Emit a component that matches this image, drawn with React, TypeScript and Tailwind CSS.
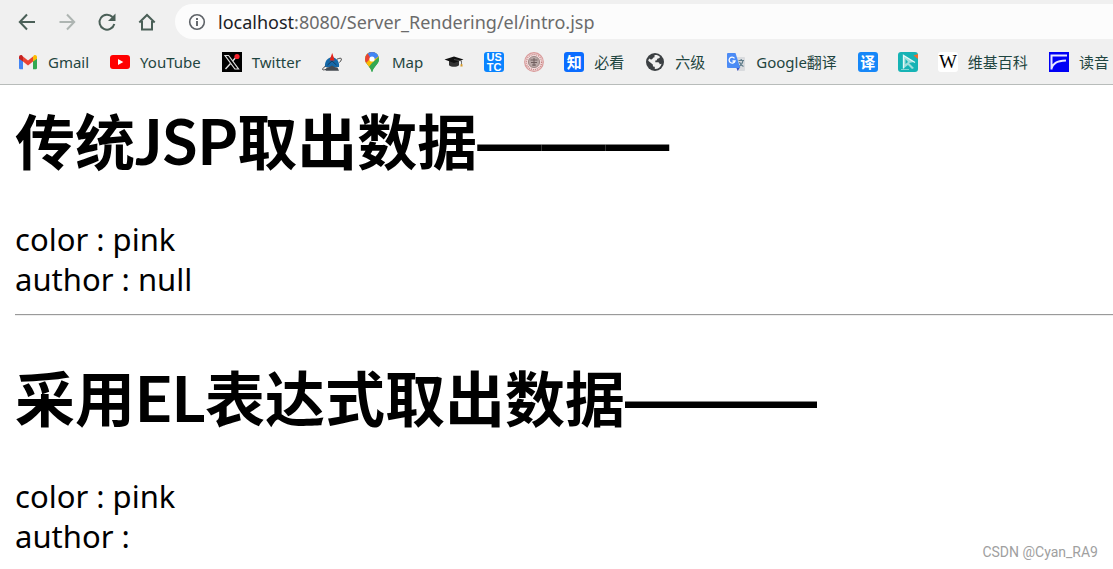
import type { ReactNode } from "react";

const GmailIcon = () => (
  <svg viewBox="0 0 20 20" className="size-5" aria-hidden="true">
    <path d="M1 16.2V6l4 3v8.2H2.2A1.2 1.2 0 0 1 1 16z" fill="#4285f4" />
    <path d="M15 17.2V9l4-3v10a1.2 1.2 0 0 1-1.2 1.2z" fill="#34a853" />
    <path d="M15 4.6v5L19 6.7V5c0-1.8-2-2.6-3.2-1.5z" fill="#fbbc04" />
    <path d="M5 9.6v-5l5 3.9 5-3.9v5l-5 3.8z" fill="#ea4335" />
    <path d="M1 5v1.7l4 2.9v-5L4.200 3.500C2.900 2.500 1 3.300 1 5z" fill="#c5221f" />
  </svg>
);

const YouTubeIcon = () => (
  <svg viewBox="0 0 20 20" className="size-5" aria-hidden="true">
    <rect x="0" y="3" width="20" height="14" rx="3" fill="#f00" />
    <path d="M8 7v6l5.300-3z" fill="#fff" />
  </svg>
);

const XIcon = () => (
  <svg viewBox="0 0 20 20" className="size-5" aria-hidden="true">
    <rect width="20" height="20" fill="#000" />
    <path d="M3 3.500h3.600L16.500 17h-3.600z" fill="none" stroke="#ddd" strokeWidth="1.200" />
    <path d="M15.500 3.500 10.700 9M8.500 11.500 3.500 17" stroke="#ddd" strokeWidth="1.400" />
    <circle cx="15" cy="4.500" r="2.600" fill="#f5222d" />
  </svg>
);

const LauncherIcon = () => (
  <svg viewBox="0 0 20 20" className="size-5" aria-hidden="true">
    <path d="M3 15C2.500 9.500 5 6 10 5c5 1 7.500 4.500 7 10z" fill="#1468a8" />
    <path d="M3.500 14C-.5 17-.5 19 4 17.300M15 7.200c4.500-2 6-.7 2.500 3.300" fill="none" stroke="#444" strokeWidth="1" />
    <path d="M3.500 18.800 4.500 15.500l3-.5L10 13.500l2.500 1.500 3 .5 1.500 3.300z" fill="#454b52" />
    <path d="M5.500 13 10 9l4.500 4" fill="none" stroke="#163d63" />
    <path d="M10.200 1 11.700 5.500l.8 3H7.700l.9-3z" fill="#e2231a" />
  </svg>
);

const MapsIcon = () => (
  <svg viewBox="0 0 20 20" className="size-5" aria-hidden="true">
    <clipPath id="pin">
      <path d="M10 0a7 7 0 0 0-7 7c0 3 1.500 4.500 3.500 7S9.200 18 9.500 19.200q.5 1.300 1 0C10.800 18 11.500 16.500 13.500 14S17 10 17 7a7 7 0 0 0-7-7z" />
    </clipPath>
    <g clipPath="url(#pin)">
      <rect width="20" height="20" fill="#34a853" />
      <path d="M0 0h20v4L8 18 0 12z" fill="#fbbc04" />
      <path d="M0 0h13L7 8l-4 4-3-1z" fill="#ea4335" />
      <path d="M5 0h15L10 9z" fill="#4285f4" />
      <path d="M20 2 10 11l-4 5 3 4h11z" fill="#34a853" />
      <path d="M12 0h5v4l-4 3-3-3z" fill="#4285f4" />
    </g>
    <circle cx="10" cy="7" r="2.600" fill="#fff" />
  </svg>
);

const CapIcon = () => (
  <svg viewBox="0 0 20 20" className="size-5" aria-hidden="true">
    <path d="M5 9v4.200c2.500 2 7.500 2 10 0V9z" fill="#333" />
    <path d="M.5 7.500 10 4.500l9.500 3L10 11z" fill="#111" />
    <path d="M10 7.500 17.500 9v4" fill="none" stroke="#555" strokeWidth=".8" />
    <path d="M16.700 12h1.600l.3 2.500h-2.200z" fill="#d49a2c" />
  </svg>
);

const SealIcon = () => (
  <svg viewBox="0 0 20 20" className="size-5" aria-hidden="true">
    <circle cx="10" cy="10" r="9.300" fill="#f2dede" stroke="#d99a9a" strokeWidth="1.200" />
    <circle cx="10" cy="10" r="7.600" fill="none" stroke="#c48080" strokeWidth="1.300" strokeDasharray="1 1" />
    <circle cx="10" cy="10" r="5.600" fill="#b9a9a7" stroke="#927b79" strokeWidth=".8" />
    <path d="M6.500 8h7M7 10.500h6M8 13h4M10 6v8" stroke="#705f5e" strokeWidth="1" />
  </svg>
);

const GlobeIcon = () => (
  <svg viewBox="0 0 20 20" className="size-5" aria-hidden="true">
    <circle cx="10" cy="10" r="9" fill="#3c4043" />
    <path
      d="M9.500 3.200c2-.4 4 .2 5.500 1.800-.3 1.500-1.500 1.500-2.700 1.700-.3 1.300-.5 1.800-2 1.900v1.700H13c1.300 0 1.500 1 1.600 2l2-.5a7 7 0 0 1-6.800 5.200v-2.200c-1.800-.2-2-.8-2-2.400L3.200 8.800C3.500 8 3.800 7.300 4.300 6.600c1.500 1.500 2.700 1 3.200.2.500-1 .5-1.300 2-1.600z"
      fill="#f0f0f0"
    />
  </svg>
);

const TranslateIcon = () => (
  <svg viewBox="0 0 20 20" className="size-5" aria-hidden="true">
    <path d="M8 5h10a1 1 0 0 1 1 1v12a1 1 0 0 1-1 1h-6z" fill="#d9dbde" />
    <path d="M12.500 8.500h5.500M15.200 7v1.500M17 8.500c-.5 3-2 4.800-4 6M13.500 10c.5 2 2 3.500 4 4.500" fill="none" stroke="#607d8b" strokeWidth="1.200" />
    <path d="M10 15h4.200L11.700 19z" fill="#3a4fc4" />
    <path d="M2 1h7.500l4.700 15H2a1 1 0 0 1-1-1V2a1 1 0 0 1 1-1z" fill="#4c8bf5" />
    <path d="M8.500 6.300A3 3 0 1 0 9 9H6.500" fill="none" stroke="#fff" strokeWidth="1.300" />
  </svg>
);

const CursorIcon = () => (
  <svg viewBox="0 0 20 20" className="size-5" aria-hidden="true">
    <rect width="20" height="20" rx="3" fill="#16b3b5" />
    <path d="M15.500 3.500 20 2v5z" fill="#f26b2a" />
    <path d="M5.500 3.500 16 10l-5 1 5 5-2 1-4-4-4.500 3.500z" fill="#9fdedb" />
    <path d="M5.500 16.500v-13L17 10.500" fill="none" stroke="#e6f8f7" strokeWidth="1.300" />
    <path d="M7.500 7v5l2.500-2z" fill="#16b3b5" />
    <path d="M3 17.500h8" stroke="#7ed6d4" />
  </svg>
);

const ReadIcon = () => (
  <svg viewBox="0 0 20 20" className="size-5" aria-hidden="true">
    <rect width="20" height="20" fill="#0000f5" />
    <path d="M2.500 17.500V3.500h15.500M2.500 16.500C4 11.500 7 9 17 8.500" fill="none" stroke="#e8e8ff" strokeWidth="2" />
  </svg>
);

const tile = "flex size-5 items-center justify-center rounded-[3px]";

const bookmarks: { name: string; label?: string; icon: ReactNode }[] = [
  { name: "Gmail", label: "Gmail", icon: <GmailIcon /> },
  { name: "YouTube", label: "YouTube", icon: <YouTubeIcon /> },
  { name: "Twitter", label: "Twitter", icon: <XIcon /> },
  { name: "Launcher", icon: <LauncherIcon /> },
  { name: "Map", label: "Map", icon: <MapsIcon /> },
  { name: "Scholar", icon: <CapIcon /> },
  {
    name: "USTC",
    icon: (
      <span
        className={`${tile} bg-[#0a84ff] text-center font-['Liberation_Sans',sans-serif] text-[11px] leading-[10px] font-bold text-white`}
      >
        US
        <br />
        TC
      </span>
    ),
  },
  { name: "University", icon: <SealIcon /> },
  {
    name: "必看",
    label: "必看",
    icon: <span className={`${tile} bg-[#0a6cff] text-[15px] leading-5 font-bold text-white`}>知</span>,
  },
  { name: "六级", label: "六级", icon: <GlobeIcon /> },
  { name: "Google翻译", label: "Google翻译", icon: <TranslateIcon /> },
  {
    name: "译",
    icon: <span className={`${tile} bg-[#1687f8] text-[15px] leading-5 font-bold text-white`}>译</span>,
  },
  { name: "Cursor", icon: <CursorIcon /> },
  {
    name: "维基百科",
    label: "维基百科",
    icon: (
      <span className={`${tile} bg-white font-['Liberation_Serif',serif] text-[19px] leading-5 text-black`}>W</span>
    ),
  },
  { name: "读音", label: "读音", icon: <ReadIcon /> },
];

const navButtons = [
  { name: "Back", color: "text-[#4a5f57]", path: "M18 10H3.500M10 2.500 2.800 10l7.200 7.500" },
  { name: "Forward", color: "text-[#aeb5b2]", path: "M2.500 10H17M10 2.500l7.200 7.500-7.200 7.500" },
  { name: "Reload", color: "text-[#4a5f57]", path: "M15.500 5A7.500 7.500 0 1 0 17.300 12", tip: "M18.500 1.500v7.500H11z" },
  { name: "Home", color: "text-[#4a5f57]", path: "M2.300 10.500 10 3l7.700 7.500M5 9v8.500h10V9" },
];

const Toolbar = () => (
  <div className="flex items-center pt-1 pl-[17px]">
    <div className="flex gap-5">
      {navButtons.map((btn) => (
        <button key={btn.name} type="button" aria-label={btn.name} className={btn.color}>
          <svg viewBox="0 0 20 20" className="size-5" fill="none" stroke="currentColor" strokeWidth="2">
            <path d={btn.path} />
            {btn.tip && <path d={btn.tip} fill="currentColor" stroke="none" />}
          </svg>
        </button>
      ))}
    </div>
    <div className="ml-[18px] flex h-[35px] min-w-0 flex-1 items-center rounded-l-full bg-[#fcfcfc] pl-3">
      <svg viewBox="0 0 20 20" className="size-5 shrink-0" fill="none" stroke="#5f6368" aria-hidden="true">
        <circle cx="10" cy="10" r="7.300" strokeWidth="1.600" />
        <path d="M10 9v5M10 6v2" strokeWidth="1.900" />
      </svg>
      <div className="ml-[11px] truncate text-[18px] leading-6 text-[#6b6b6b]">
        <span className="text-[#202124]">localhost</span>:8080/Server_Rendering/el/intro.jsp
      </div>
    </div>
  </div>
);

const BookmarksBar = () => (
  <nav aria-label="Bookmarks" className="flex h-[45px] items-center gap-5 overflow-hidden pl-[18px]">
    {bookmarks.map((item) => (
      <a key={item.name} href="#" aria-label={item.name} className="flex shrink-0 items-center gap-[10px]">
        {item.icon}
        {item.label && <span className="pr-px text-[15px] leading-5 text-[#1f4540]">{item.label}</span>}
      </a>
    ))}
  </nav>
);

const Title = ({ children }: { children: ReactNode }) => (
  <h1 className="text-[60px] leading-[84px] font-bold whitespace-nowrap">
    {children}
    <span className="font-['Liberation_Sans',sans-serif] text-[64px] leading-none">———</span>
  </h1>
);

const Latin = ({ children }: { children: ReactNode }) => (
  <span className="font-[Lato,sans-serif] text-[64px] leading-none">{children}</span>
);

const App = () => {
  return (
    <div className="relative min-h-screen overflow-hidden bg-white font-['Noto_Sans','Noto_Sans_CJK_SC',sans-serif] text-black">
      <header className="border-b border-[#b8bcba] bg-[#f0f0f0]">
        <Toolbar />
        <BookmarksBar />
      </header>

      <main className="pt-[15px] pl-[15px] text-[31px] leading-10">
        <Title>
          传统<Latin>JSP</Latin>取出数据
        </Title>
        <p className="mt-[35px]">
          color : pink
          <br />
          author : null
        </p>
        <hr className="mt-[15px] mb-[41px] border-t border-b border-t-[#9a9a9a] border-b-[#eeeeee]" />
        <Title>
          采用<Latin>EL</Latin>表达式取出数据
        </Title>
        <p className="mt-[35px]">
          color : pink
          <br />
          author :
        </p>
      </main>

      <div className="absolute right-[15px] bottom-[7px] font-[Roboto,sans-serif] text-[14px] leading-5 text-[#a0a0a0]">
        CSDN @Cyan_RA9
      </div>
    </div>
  );
};

export default App;
